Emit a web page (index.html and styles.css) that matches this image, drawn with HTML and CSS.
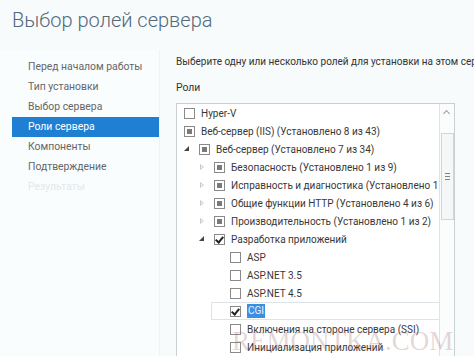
FILE: index.html
```html
<!DOCTYPE html>
<html>
<head>
  <title>Выбор ролей сервера</title>
  <link rel="stylesheet" href="styles.css">
</head>
<body>
  <h1 class="title">Выбор ролей сервера</h1>
  <div class="main">
    <ul class="nav">
      <li>Перед началом работы</li>
      <li>Тип установки</li>
      <li>Выбор сервера</li>
      <li class="active">Роли сервера</li>
      <li>Компоненты</li>
      <li>Подтверждение</li>
      <li class="faded">Результаты</li>
    </ul>
    <div class="content">
      <p class="intro">Выберите одну или несколько ролей для установки на этом сервере.</p>
      <div class="label">Роли</div>
      <div class="listbox">
        <div class="tree">
          <div class="row l0"><span class="box"></span><span class="txt">Hyper-V</span></div>
          <div class="row l0"><span class="box part"></span><span class="txt">Веб-сервер (IIS) (Установлено 8 из 43)</span></div>
          <div class="row l1"><span class="arrow open"></span><span class="box part"></span><span class="txt">Веб-сервер (Установлено 7 из 34)</span></div>
          <div class="row l2"><span class="arrow"></span><span class="box part"></span><span class="txt">Безопасность (Установлено 1 из 9)</span></div>
          <div class="row l2"><span class="arrow"></span><span class="box part"></span><span class="txt">Исправность и диагностика (Установлено 1 из 6)</span></div>
          <div class="row l2"><span class="arrow"></span><span class="box part"></span><span class="txt">Общие функции HTTP (Установлено 4 из 6)</span></div>
          <div class="row l2"><span class="arrow"></span><span class="box part"></span><span class="txt">Производительность (Установлено 1 из 2)</span></div>
          <div class="row l2"><span class="arrow open"></span><span class="box checked"></span><span class="txt">Разработка приложений</span></div>
          <div class="row l3"><span class="arrow none"></span><span class="box"></span><span class="txt">ASP</span></div>
          <div class="row l3"><span class="arrow none"></span><span class="box"></span><span class="txt">ASP.NET 3.5</span></div>
          <div class="row l3"><span class="arrow none"></span><span class="box"></span><span class="txt">ASP.NET 4.5</span></div>
          <div class="row l3 selected"><span class="arrow none"></span><span class="box checked"></span><span class="txt hl">CGI</span></div>
          <div class="row l3"><span class="arrow none"></span><span class="box"></span><span class="txt">Включения на стороне сервера (SSI)</span></div>
          <div class="row l3"><span class="arrow none"></span><span class="box"></span><span class="txt">Инициализация приложений</span></div>
        </div>
        <div class="scroll">
          <div class="up"></div>
          <div class="thumb"><span class="grip"></span></div>
        </div>
      </div>
    </div>
  </div>
  <div class="watermark">REMONTKA.COM</div>
</body>
</html>
```

FILE: styles.css
```css
body {
  margin: 0;
  height: 356px;
  overflow: hidden;
  background: #f7fbfc;
  font-family: Roboto, "Noto Sans", sans-serif;
  color: #3c3c3c;
}

.title {
  margin: 0;
  padding: 8px 0 0 12px;
  height: 42px;
  font-size: 20px;
  font-weight: 300;
  color: #51697a;
}

.main {
  display: grid;
  grid-template-columns: 160px 1fr;
}

/* left steps */
.nav {
  list-style: none;
  margin: 0;
  padding: 7px 0 0 12px;
  background: #fafdfe;
  height: 320px;
  border-right: 1px solid #eef3f5;
}

.nav li {
  height: 20px;
  line-height: 20px;
  padding-left: 16px;
  font-size: 10.4px;
  color: #666;
  white-space: nowrap;
}

.nav li.active {
  background: #1f7fd3;
  color: #fff;
}

.nav li.faded {
  color: #e2e8eb;
}

/* right side */
.content {
  padding-left: 16px;
  overflow: hidden;
}

.intro {
  margin: 3px 0 0;
  height: 18px;
  line-height: 18px;
  font-size: 10px;
  white-space: nowrap;
  color: #333;
}

.label {
  margin-top: 8px;
  height: 18px;
  line-height: 18px;
  font-size: 10.4px;
  color: #333;
}

.listbox {
  margin-top: 6px;
  width: 277px;
  height: 260px;
  border: 1px solid #c8d0d4;
  background: #fff;
  display: flex;
}

.tree {
  flex: 1;
  min-width: 0;
  overflow: hidden;
}

.row {
  height: 18px;
  display: flex;
  align-items: center;
  white-space: nowrap;
  font-size: 10px;
  color: #383838;
}

.l0 { padding-left: 7px; }
.l1 { padding-left: 7px; }
.l2 { padding-left: 22px; }
.l3 { padding-left: 38px; }

.row.selected {
  margin-left: 34px;
  padding-left: 3px;
  border: 1px solid #dde3e6;
  border-right: none;
  height: 16px;
}

.arrow {
  width: 15px;
  height: 18px;
  flex: none;
  position: relative;
}

.arrow::before {
  content: "";
  position: absolute;
  left: 1px;
  top: 6px;
  border-left: 4px solid #c4c9cc;
  border-top: 3px solid transparent;
  border-bottom: 3px solid transparent;
}

.arrow::after {
  content: "";
  position: absolute;
  left: 2px;
  top: 8px;
  border-left: 2px solid #fff;
  border-top: 1px solid transparent;
  border-bottom: 1px solid transparent;
}

.arrow.open::before {
  left: 0;
  top: 6px;
  border: none;
  width: 0;
  height: 0;
  border-bottom: 5px solid #444;
  border-left: 5px solid transparent;
}

.arrow.open::after,
.arrow.none::before,
.arrow.none::after {
  display: none;
}

.box {
  width: 9px;
  height: 9px;
  flex: none;
  border: 1px solid #8a8a8a;
  background: #fff;
  margin-right: 6px;
  position: relative;
}

.box.part::after {
  content: "";
  position: absolute;
  left: 2px;
  top: 2px;
  width: 5px;
  height: 5px;
  background: #7a7a7a;
}

.box.checked::after {
  content: "";
  position: absolute;
  left: 2px;
  top: 0;
  width: 3px;
  height: 6px;
  border-right: 2px solid #222;
  border-bottom: 2px solid #222;
  transform: rotate(40deg);
}

.txt.hl {
  background: #3b8fe0;
  color: #e8f2ff;
  padding: 0 1px;
  line-height: 14px;
}

/* scrollbar */
.scroll {
  width: 14px;
  flex: none;
  border-left: 1px solid #dfe4e6;
  background: #fbfcfc;
}

.up {
  height: 20px;
  position: relative;
}

.up::before {
  content: "";
  position: absolute;
  left: 4px;
  top: 7px;
  width: 4px;
  height: 4px;
  border-left: 1px solid #9aa0a3;
  border-top: 1px solid #9aa0a3;
  transform: rotate(45deg);
}

.thumb {
  margin: 9px 0 0 1px;
  width: 11px;
  height: 85px;
  border: 1px solid #cfd5d8;
  background: #f4f6f7;
  display: flex;
  align-items: center;
  justify-content: center;
}

.grip {
  width: 5px;
  height: 5px;
  border-top: 1px solid #7d8386;
  border-bottom: 1px solid #7d8386;
  position: relative;
}

.grip::after {
  content: "";
  position: absolute;
  left: 0;
  top: 2px;
  width: 5px;
  border-top: 1px solid #7d8386;
}

/* watermark over the screenshot */
.watermark {
  position: absolute;
  left: 232px;
  top: 327px;
  line-height: 28px;
  font-family: "Liberation Serif", serif;
  font-size: 27px;
  color: rgba(160, 110, 110, 0.28);
}
```
